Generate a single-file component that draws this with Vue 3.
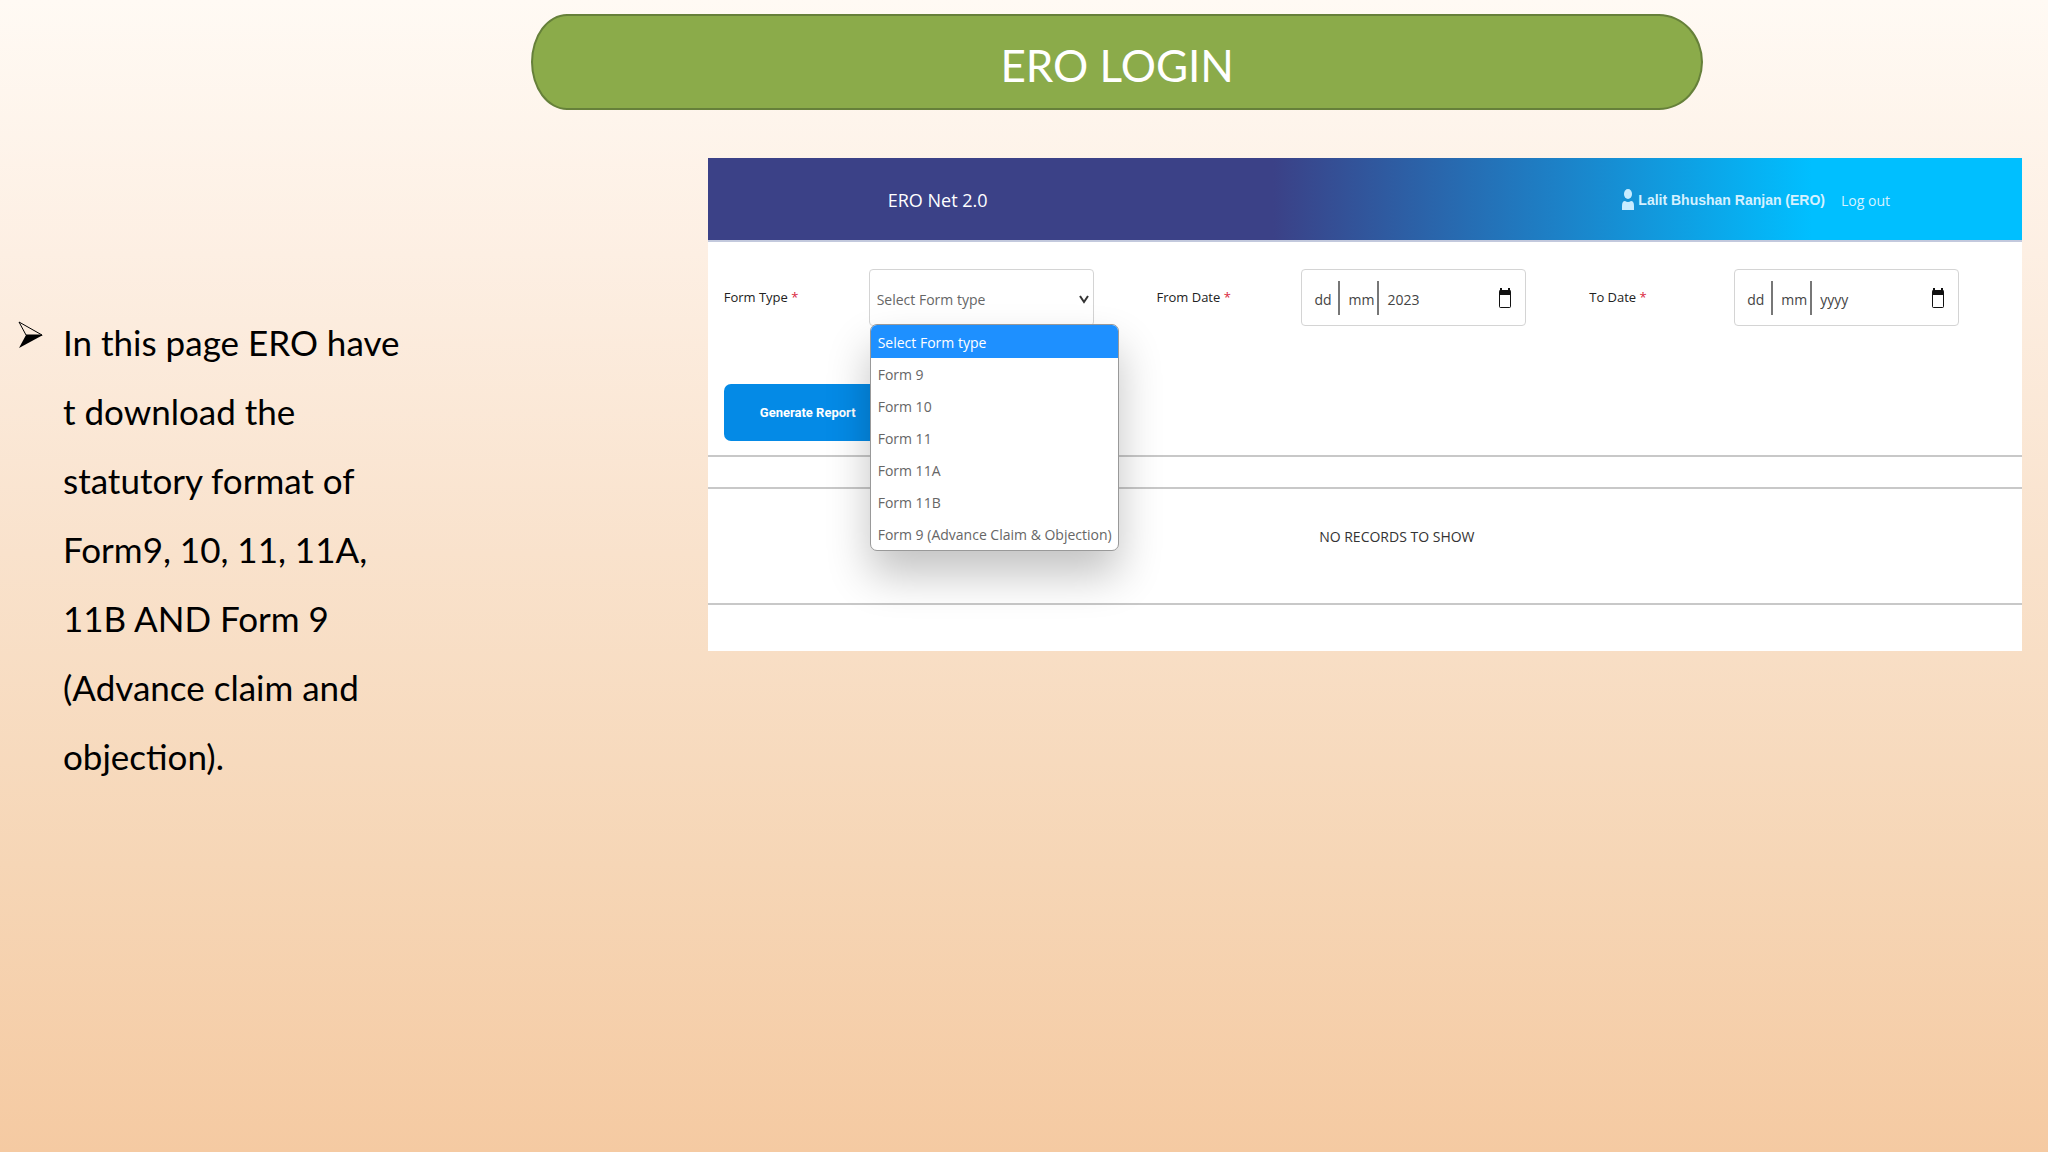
<script setup>
import { ref } from 'vue'

const formTypes = [
  'Select Form type',
  'Form 9',
  'Form 10',
  'Form 11',
  'Form 11A',
  'Form 11B',
  'Form 9 (Advance Claim & Objection)',
]
const selected = ref(formTypes[0])

const dates = ref([
  { id: 'from', label: 'From Date', year: '2023' },
  { id: 'to', label: 'To Date', year: '' },
])
</script>

<template>
  <div class="slide">
    <h1 class="title">ERO LOGIN</h1>

    <div class="content">
      <ul class="notes">
        <li>
          <svg class="bullet" viewBox="0 0 26 28" aria-hidden="true">
            <path d="M1 1 L24 14 H8 Z" fill="none" stroke="#000" stroke-width="1" />
            <path d="M8 14 H25 L1 27 Z" fill="#000" />
          </svg>
          <p>In this page ERO have t download the statutory format of Form9, 10, 11, 11A, 11B AND Form 9 (Advance claim and objection).</p>
        </li>
      </ul>

      <section class="panel">
        <header class="bar">
          <span class="brand">ERO Net 2.0</span>
          <div class="account">
            <svg class="user" viewBox="0 0 12 22" aria-hidden="true">
              <ellipse cx="6" cy="5" rx="4" ry="5" />
              <path d="M0 21 V17 Q0 12 3 12 Q6 14 9 12 Q12 12 12 17 V21 Z" />
            </svg>
            <strong>Lalit Bhushan Ranjan (ERO)</strong>
            <a href="#">Log out</a>
          </div>
        </header>

        <form class="filters" @submit.prevent>
          <div class="field">
            <label for="form-type">Form Type <i>*</i></label>
            <div class="control">
              <select id="form-type" v-model="selected">
                <option v-for="name in formTypes" :key="name">{{ name }}</option>
              </select>
              <svg class="chevron" viewBox="0 0 10 10" aria-hidden="true">
                <path d="M1 2 L5 8 L9 2" fill="none" stroke="#333" stroke-width="2" />
              </svg>
              <ul class="menu" role="listbox" aria-label="Form Type">
                <li
                  v-for="name in formTypes"
                  :key="name"
                  role="option"
                  :aria-selected="name === selected"
                  :class="{ active: name === selected }"
                  @click="selected = name"
                >{{ name }}</li>
              </ul>
            </div>
          </div>

          <div v-for="date in dates" :key="date.id" class="field">
            <label :for="date.id + '-day'">{{ date.label }} <i>*</i></label>
            <div class="control date">
              <input :id="date.id + '-day'" class="day" type="text" placeholder="dd">
              <input class="month" type="text" placeholder="mm" :aria-label="date.label + ' month'">
              <input v-model="date.year" class="year" type="text" placeholder="yyyy" :aria-label="date.label + ' year'">
              <button class="calendar" type="button" :aria-label="'Pick ' + date.label">
                <svg viewBox="0 0 12 20" aria-hidden="true">
                  <path d="M1 0 H3 V2 H9 V0 H11 V2 Q12 2 12 4 V18 Q12 20 10 20 H2 Q0 20 0 18 V4 Q0 2 1 2 Z M1 7 V19 H11 V7 Z" fill-rule="evenodd" />
                </svg>
              </button>
            </div>
          </div>

          <button class="generate" type="submit">Generate Report</button>
        </form>

        <div class="strip"></div>
        <p class="empty">NO RECORDS TO SHOW</p>
        <div class="foot"></div>
      </section>
    </div>
  </div>
</template>

<style>
body {
  margin: 0;
}
</style>

<style scoped>
* {
  box-sizing: border-box;
}

.slide {
  min-height: 100vh;
  padding-top: 14px;
  background: linear-gradient(#fffaf4 0%, #fdefe3 22%, #f9e2cc 48%, #f6d6b6 75%, #f5caa2 100%);
  font-family: Lato, sans-serif;
  color: #000;
}

.title {
  width: 57.2%;
  height: 96px;
  margin: 0 0 0 25.95%;
  padding-top: 5px;
  border: 2px solid #66803a;
  border-radius: 36px 44px 44px 36px / 48px;
  background: #8bab4a;
  color: #fff;
  font-size: 44px;
  font-weight: 400;
  line-height: 88px;
  text-align: center;
}

.content {
  display: grid;
  grid-template-columns: 35% 1fr;
  align-items: start;
  padding: 48px 26px 0 0;
}

.notes {
  margin: 0;
  padding: 150px 0 0 18px;
  list-style: none;
}

.notes li {
  display: flex;
  gap: 19px;
}

.bullet {
  flex: none;
  width: 26px;
  height: 28px;
  margin-top: 13px;
}

.notes p {
  max-width: 345px;
  margin: 0;
  font-size: 35px;
  line-height: 69px;
}

.panel {
  background: #fff;
  font-family: "Open Sans", "Noto Sans", sans-serif;
  font-size: 14px;
}

.bar {
  display: flex;
  align-items: center;
  justify-content: space-between;
  height: 84px;
  padding: 2px 132px 0 180px;
  border-bottom: 2px solid #c3c9dd;
  background: linear-gradient(90deg, #3b4187 43%, #1c82c8 65%, #00bfff 84%);
  color: #fff;
}

.brand {
  font-size: 18px;
}

.account {
  display: flex;
  align-items: center;
  color: #d5f1ff;
}

.account strong {
  font-family: "Liberation Sans", sans-serif;
}

.account a {
  margin-left: 16px;
  color: inherit;
  font-weight: 500;
  text-decoration: none;
}

.user {
  width: 12px;
  height: 22px;
  margin-right: 4px;
  fill: #c8ecff;
}

.filters {
  display: grid;
  grid-template-columns: repeat(3, 1fr);
  row-gap: 58px;
  padding: 27px 0 14px 16px;
}

.field {
  display: flex;
}

.field label {
  width: 33.5%;
  padding-top: 16px;
  color: #222;
  font-size: 13px;
  font-weight: 500;
  line-height: 24px;
}

.field i {
  color: #d9263c;
  font-style: normal;
}

.control {
  position: relative;
  width: 52%;
  height: 57px;
  border: 1px solid #d4d4d4;
  border-radius: 4px;
}

select,
input,
button {
  margin: 0;
  padding: 0;
  border: 0;
  background: none;
  color: #444;
  font: inherit;
}

select {
  width: 100%;
  height: 100%;
  padding: 4px 24px 0 7px;
  appearance: none;
  color: #666;
}

.chevron {
  position: absolute;
  top: 24px;
  right: 4px;
  width: 10px;
  height: 10px;
}

.menu {
  position: absolute;
  z-index: 1;
  top: 54px;
  left: 0;
  width: 249px;
  margin: 0;
  padding: 0;
  overflow: hidden;
  border: 1px solid #999;
  border-radius: 7px;
  background: #fff;
  box-shadow: 0 24px 44px rgba(0, 0, 0, 0.24);
  color: #666;
  list-style: none;
}

.menu li {
  padding: 1px 0 0 7px;
  line-height: 31px;
  white-space: nowrap;
}

.menu .active {
  padding-top: 2px;
  background: #1e90ff;
  color: #fff;
}

.date {
  display: flex;
  align-items: center;
  padding: 0 14px 0 12px;
}

.date input {
  height: 34px;
  padding-top: 3px;
}

.date input::placeholder {
  color: #444;
  opacity: 1;
}

.date .day {
  width: 26px;
  border-right: 2px solid #777;
}

.date .month {
  width: 39px;
  padding-left: 8px;
  border-right: 2px solid #777;
}

.date .year {
  width: 60px;
  padding-left: 8px;
}

.calendar {
  width: 12px;
  height: 20px;
  margin-left: auto;
}

.calendar svg {
  display: block;
  width: 12px;
  height: 20px;
  fill: #111;
}

.generate {
  width: 168px;
  height: 57px;
  border-radius: 7px;
  background: #048ae6;
  color: #fff;
  font-family: Roboto, sans-serif;
  font-size: 13px;
  font-weight: 700;
}

.strip {
  height: 34px;
  border: solid #c8c8c8;
  border-width: 2px 0;
}

.empty {
  margin: 0;
  padding: 32px 0 50px 64px;
  border-bottom: 2px solid #c8c8c8;
  color: #333;
  line-height: 32px;
  text-align: center;
}

.foot {
  height: 46px;
}
</style>
